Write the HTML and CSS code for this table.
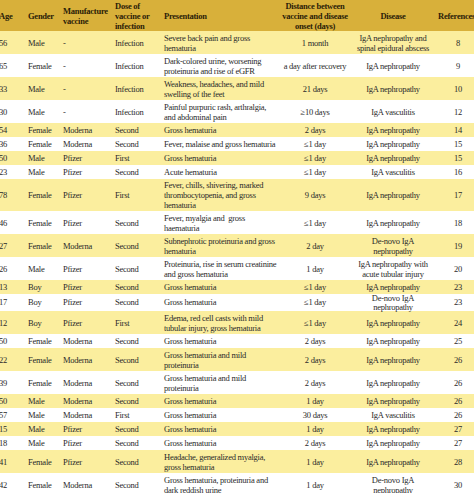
FILE: index.html
```html
<!DOCTYPE html>
<html>
<head>
<meta charset="utf-8">
<link rel="stylesheet" href="styles.css">
</head>
<body>
<table class="tbl">
<colgroup>
<col class="c-age"><col class="c-gen"><col class="c-man"><col class="c-dose"><col class="c-pres"><col class="c-dist"><col class="c-dis"><col class="c-ref">
</colgroup>
<thead>
<tr class="head">
<th>Age</th><th>Gender</th><th>Manufacture<br>vaccine</th><th>Dose of<br>vaccine or<br>infection</th><th>Presentation</th><th class="ctr">Distance between<br>vaccine and disease<br>onset (days)</th><th class="ctr">Disease</th><th class="refh">References</th>
</tr>
</thead>
<tbody>
<tr class="y l2"><td>56</td><td>Male</td><td>-</td><td>Infection</td><td>Severe back pain and gross<br>hematuria</td><td class="ctr">1 month</td><td class="ctr">IgA nephropathy and<br>spinal epidural abscess</td><td class="ctr">8</td></tr>
<tr class="w l2"><td>65</td><td>Female</td><td>-</td><td>Infection</td><td>Dark-colored urine, worsening<br>proteinuria and rise of eGFR</td><td class="ctr">a day after recovery</td><td class="ctr">IgA nephropathy</td><td class="ctr">9</td></tr>
<tr class="y l2"><td>33</td><td>Male</td><td>-</td><td>Infection</td><td>Weakness, headaches, and mild<br>swelling of the feet</td><td class="ctr">21 days</td><td class="ctr">IgA nephropathy</td><td class="ctr">10</td></tr>
<tr class="w l2"><td>30</td><td>Male</td><td>-</td><td>Infection</td><td>Painful purpuric rash, arthralgia,<br>and abdominal pain</td><td class="ctr">≥10 days</td><td class="ctr">IgA vasculitis</td><td class="ctr">12</td></tr>
<tr class="y l1"><td>54</td><td>Female</td><td>Moderna</td><td>Second</td><td>Gross hematuria</td><td class="ctr">2 days</td><td class="ctr">IgA nephropathy</td><td class="ctr">14</td></tr>
<tr class="w l1"><td>36</td><td>Female</td><td>Moderna</td><td>Second</td><td>Fever, malaise and gross hematuria</td><td class="ctr">≤1 day</td><td class="ctr">IgA nephropathy</td><td class="ctr">15</td></tr>
<tr class="y l1"><td>50</td><td>Male</td><td>Pfizer</td><td>First</td><td>Gross hematuria</td><td class="ctr">≤1 day</td><td class="ctr">IgA nephropathy</td><td class="ctr">15</td></tr>
<tr class="w l1"><td>23</td><td>Male</td><td>Pfizer</td><td>Second</td><td>Acute hematuria</td><td class="ctr">≤1 day</td><td class="ctr">IgA vasculitis</td><td class="ctr">16</td></tr>
<tr class="y l3"><td>78</td><td>Female</td><td>Pfizer</td><td>First</td><td>Fever, chills, shivering, marked<br>thrombocytopenia, and gross<br>hematuria</td><td class="ctr">9 days</td><td class="ctr">IgA nephropathy</td><td class="ctr">17</td></tr>
<tr class="w l2"><td>46</td><td>Female</td><td>Pfizer</td><td>Second</td><td>Fever, myalgia and&nbsp; gross<br>haematuria</td><td class="ctr">≤1 day</td><td class="ctr">IgA nephropathy</td><td class="ctr">18</td></tr>
<tr class="y l2"><td>27</td><td>Female</td><td>Moderna</td><td>Second</td><td>Subnephrotic proteinuria and gross<br>hematuria</td><td class="ctr">2 day</td><td class="ctr">De-novo IgA<br>nephropathy</td><td class="ctr">19</td></tr>
<tr class="w l2"><td>26</td><td>Male</td><td>Pfizer</td><td>Second</td><td>Proteinuria, rise in serum creatinine<br>and gross hematuria</td><td class="ctr">1 day</td><td class="ctr">IgA nephropathy with<br>acute tubular injury</td><td class="ctr">20</td></tr>
<tr class="y l1"><td>13</td><td>Boy</td><td>Pfizer</td><td>Second</td><td>Gross hematuria</td><td class="ctr">≤1 day</td><td class="ctr">IgA nephropathy</td><td class="ctr">23</td></tr>
<tr class="w ltight"><td>17</td><td>Boy</td><td>Pfizer</td><td>Second</td><td>Gross hematuria</td><td class="ctr">≤1 day</td><td class="ctr">De-novo IgA<br>nephropathy</td><td class="ctr">23</td></tr>
<tr class="y l2"><td>12</td><td>Boy</td><td>Pfizer</td><td>First</td><td>Edema, red cell casts with mild<br>tubular injury, gross hematuria</td><td class="ctr">≤1 day</td><td class="ctr">IgA nephropathy</td><td class="ctr">24</td></tr>
<tr class="w l1"><td>50</td><td>Female</td><td>Moderna</td><td>Second</td><td>Gross hematuria</td><td class="ctr">2 days</td><td class="ctr">IgA nephropathy</td><td class="ctr">25</td></tr>
<tr class="y l2"><td>22</td><td>Female</td><td>Moderna</td><td>Second</td><td>Gross hematuria and mild<br>proteinuria</td><td class="ctr">2 days</td><td class="ctr">IgA nephropathy</td><td class="ctr">26</td></tr>
<tr class="w l2"><td>39</td><td>Female</td><td>Moderna</td><td>Second</td><td>Gross hematuria and mild<br>proteinuria</td><td class="ctr">2 days</td><td class="ctr">IgA nephropathy</td><td class="ctr">26</td></tr>
<tr class="y l1"><td>50</td><td>Male</td><td>Moderna</td><td>Second</td><td>Gross hematuria</td><td class="ctr">1 day</td><td class="ctr">IgA nephropathy</td><td class="ctr">26</td></tr>
<tr class="w l1"><td>57</td><td>Male</td><td>Moderna</td><td>First</td><td>Gross hematuria</td><td class="ctr">30 days</td><td class="ctr">IgA vasculitis</td><td class="ctr">26</td></tr>
<tr class="y l1"><td>15</td><td>Male</td><td>Pfizer</td><td>Second</td><td>Gross hematuria</td><td class="ctr">1 day</td><td class="ctr">IgA nephropathy</td><td class="ctr">27</td></tr>
<tr class="w l1"><td>18</td><td>Male</td><td>Pfizer</td><td>Second</td><td>Gross hematuria</td><td class="ctr">2 days</td><td class="ctr">IgA nephropathy</td><td class="ctr">27</td></tr>
<tr class="y l2"><td>41</td><td>Female</td><td>Pfizer</td><td>Second</td><td>Headache, generalized myalgia,<br>gross hematuria</td><td class="ctr">1 day</td><td class="ctr">IgA nephropathy</td><td class="ctr">28</td></tr>
<tr class="w l2"><td>42</td><td>Female</td><td>Moderna</td><td>Second</td><td>Gross hematuria, proteinuria and<br>dark reddish urine</td><td class="ctr">1 day</td><td class="ctr">De-novo IgA<br>nephropathy</td><td class="ctr">30</td></tr>
</tbody>
</table>
</body>
</html>
```
FILE: styles.css
```css
html, body {
  margin: 0;
  padding: 0;
  background: #ffffff;
  overflow: hidden;
}
body {
  width: 474px;
  height: 493px;
}
.tbl {
  border-collapse: collapse;
  table-layout: fixed;
  width: 486px;
  margin-left: -6px;
  font-family: "Liberation Serif", "Times New Roman", serif;
  font-size: 8.5px;
  letter-spacing: -0.25px;
  line-height: 10px;
  color: #2a2a2a;
}
.c-age { width: 29px; }
.c-gen { width: 35px; }
.c-man { width: 52px; }
.c-dose { width: 49px; }
.c-pres { width: 121px; }
.c-dist { width: 70px; }
.c-dis { width: 86px; }
.c-ref { width: 44px; }
.tbl th, .tbl td {
  padding: 0 0 0 5px;
  text-align: left;
  vertical-align: middle;
  white-space: nowrap;
}
.tbl th {
  font-weight: bold;
  color: #2b2108;
}
.tbl .ctr {
  text-align: center;
  padding-left: 0;
}
.tbl .refh {
  text-align: left;
  padding-left: 2px;
}
.head {
  height: 31px;
  background: #d8b03a;
}
.y { background: #fbee9e; }
.w { background: #ffffff; }
.l1 { height: 14px; }
.l2 { height: 23px; }
.l3 { height: 32px; }
.ltight { height: 16px; line-height: 8.5px; }
```
